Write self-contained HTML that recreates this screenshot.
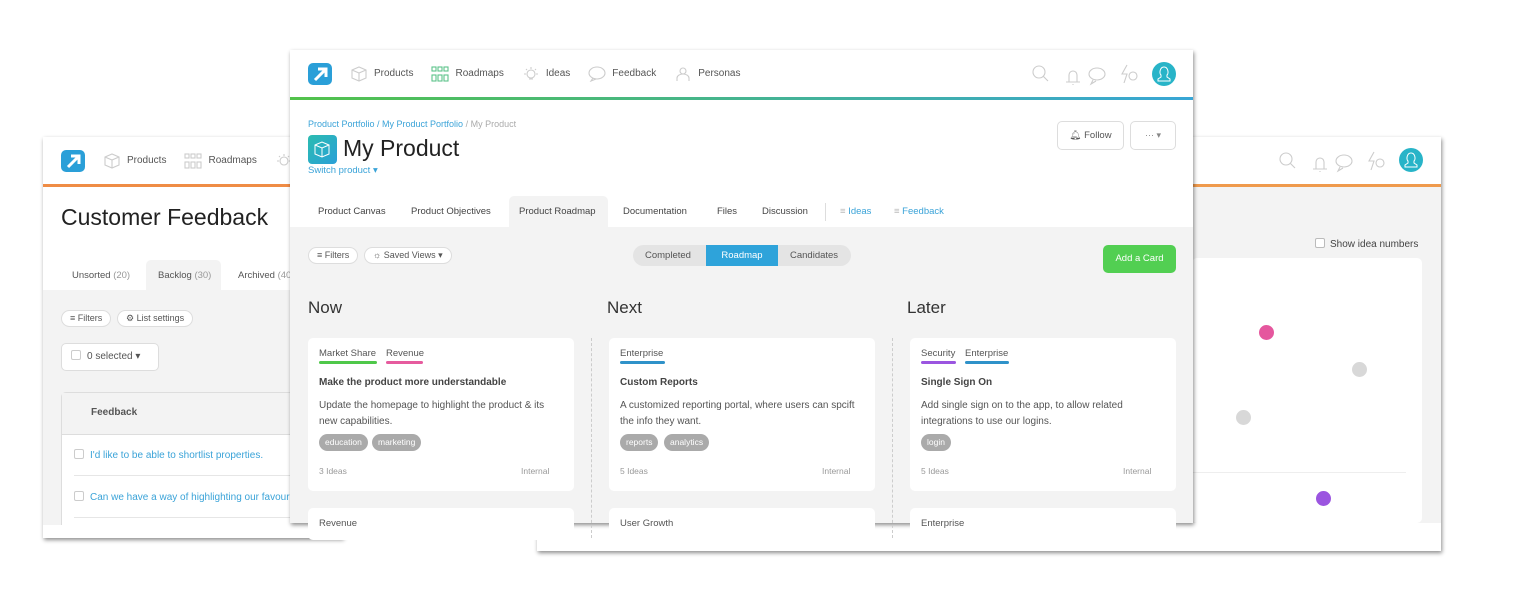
<!DOCTYPE html>
<html><head><meta charset="utf-8"><style>
*{box-sizing:border-box;margin:0;padding:0}
body{width:1522px;height:604px;background:#fff;position:relative;overflow:hidden;font-family:"Liberation Sans",sans-serif;color:#444}
.a{position:absolute}
.win{position:absolute;background:#f3f3f3;box-shadow:1px 2px 4px rgba(0,0,0,.45);overflow:hidden}
.hdr{position:absolute;left:0;right:0;top:0;height:47px;background:#fff}
.nav{position:absolute;top:0;height:47px;display:flex;align-items:center;font-size:10px;color:#555}
.nav span{margin-right:18px;display:flex;align-items:center}
.nav svg{margin-right:6px}
.logo{width:24px;height:22px;background:#2a9fd8;border-radius:5px;position:relative}
.logo svg{position:absolute;left:3px;top:3px}
.pill{position:absolute;height:17px;border:1px solid #ddd;border-radius:9px;background:#fff;font-size:9px;color:#555;padding:0 8px;line-height:15px}
.card{position:absolute;background:#fff;border-radius:5px;width:266px}
.card .lb{position:absolute;top:10px;font-size:9.5px;color:#555}
.card .ln{position:absolute;top:23px;height:3px;border-radius:2px}
.card h4{position:absolute;left:11px;top:39px;font-size:10px;color:#444}
.card p{position:absolute;left:11px;top:60px;font-size:10px;line-height:16px;color:#555;width:240px}
.tag{position:absolute;top:96px;height:17px;border-radius:9px;background:#aaa;color:#fff;font-size:8.5px;line-height:17px;padding:0 6px}
.ft{position:absolute;top:128px;font-size:8.5px;color:#999}
.ic{fill:none;stroke:#ccc;stroke-width:1.1}
.col{position:absolute;top:298px;font-size:17px;color:#333}
.av{position:absolute;width:24px;height:24px;border-radius:50%;background:#28b4c8}
.av svg{position:absolute;left:5px;top:4px}
</style></head><body>

<!-- left window -->
<div class="win" style="left:43px;top:137px;width:300px;height:401px">
 <div class="hdr" style="border-bottom:3px solid #ef8c45;height:50px"></div>
 <div class="nav" style="left:18px"><span><div class="logo"><svg width="18" height="16"><path d="M4 14L14 4M7 3h8v8" fill="none" stroke="#fff" stroke-width="3"/></svg></div></span>
  <span><svg width="18" height="16" class="ic"><path d="M2 4l7-3 7 3v8l-7 3-7-3zM2 4l7 3 7-3M9 7v8"/></svg>Products</span>
  <span><svg width="18" height="16" class="ic"><rect x="1" y="1" width="4" height="4"/><rect x="7" y="1" width="4" height="4"/><rect x="13" y="1" width="4" height="4"/><rect x="1" y="9" width="4" height="6"/><rect x="7" y="9" width="4" height="6"/><rect x="13" y="9" width="4" height="6"/></svg>Roadmaps</span>
  <span><svg width="18" height="16" class="ic"><circle cx="9" cy="8" r="4"/><path d="M9 1v2M2 8h2M14 8h2M4 3l1 1M14 3l-1 1"/></svg></span></div>
 <div class="a" style="left:0;top:50px;width:300px;height:103px;background:#fff"></div>
 <div class="a" style="left:18px;top:67px;font-size:23px;color:#222">Customer Feedback</div>
 <div class="a" style="left:103px;top:123px;width:75px;height:30px;background:#f3f3f3;border-radius:5px 5px 0 0"></div>
 <div class="a" style="left:29px;top:133px;font-size:9.5px;color:#555">Unsorted <span style="color:#999">(20)</span></div>
 <div class="a" style="left:115px;top:133px;font-size:9.5px;color:#555">Backlog <span style="color:#999">(30)</span></div>
 <div class="a" style="left:195px;top:133px;font-size:9.5px;color:#555">Archived <span style="color:#999">(40)</span></div>
 <div class="pill" style="left:18px;top:173px">≡ Filters</div>
 <div class="pill" style="left:74px;top:173px">⚙ List settings</div>
 <div class="a" style="left:18px;top:206px;width:98px;height:28px;background:#fff;border:1px solid #ddd;border-radius:5px;font-size:10px;line-height:26px;padding-left:9px;color:#555"><span style="display:inline-block;width:10px;height:10px;border:1px solid #ccc;border-radius:2px;vertical-align:-1px;margin-right:6px"></span>0 selected ▾</div>
 <div class="a" style="left:18px;top:255px;width:290px;height:140px;background:#fff;border:1px solid #ddd;border-radius:5px"></div>
 <div class="a" style="left:19px;top:256px;width:290px;height:42px;background:#f3f3f3;border-bottom:1px solid #ddd"></div>
 <div class="a" style="left:48px;top:270px;font-size:10px;font-weight:bold;color:#555">Feedback</div>
 <div class="a" style="left:31px;top:312px;font-size:10px;color:#3aa3d8;white-space:nowrap"><span style="display:inline-block;width:10px;height:10px;border:1px solid #ccc;border-radius:2px;margin-right:6px;vertical-align:-1px"></span>I'd like to be able to shortlist properties.</div>
 <div class="a" style="left:31px;top:338px;width:270px;height:1px;background:#e6e6e6"></div>
 <div class="a" style="left:31px;top:354px;font-size:10px;color:#3aa3d8;white-space:nowrap"><span style="display:inline-block;width:10px;height:10px;border:1px solid #ccc;border-radius:2px;margin-right:6px;vertical-align:-1px"></span>Can we have a way of highlighting our favourites</div>
 <div class="a" style="left:31px;top:380px;width:270px;height:1px;background:#e6e6e6"></div>
 <div class="a" style="left:0;top:388px;width:300px;height:13px;background:#fff"></div>
</div>

<!-- right window -->
<div class="win" style="left:537px;top:137px;width:904px;height:414px">
 <div class="hdr" style="border-bottom:3px solid #ef9a4c;height:50px"></div>
 <div class="a" style="left:740px;top:13px"><svg width="140" height="24" class="ic"><circle cx="9" cy="9" r="6"/><path d="M13 13l5 5"/><path d="M36 19h14M39 19v-7a4 4 0 018 0v7M43 21v1"/><ellipse cx="67" cy="11" rx="8" ry="6"/><path d="M63 17l-2 4 5-3"/><path d="M97 2l-5 9h5l-3 9M99 13a4 4 0 108 0a4 4 0 10-8 0"/></svg></div>
 <div class="av" style="left:862px;top:11px"><svg width="14" height="16" fill="none" stroke="#fff" stroke-width="1"><path d="M4 9C2 7 3 1 7 1s5 6 3 8v2l3 2v2H1v-2l3-2z"/></svg></div>
 <div class="a" style="left:778px;top:101px;font-size:10px;color:#444"><span style="display:inline-block;width:10px;height:10px;border:1px solid #bbb;border-radius:2px;background:#fff;vertical-align:-1px;margin-right:5px"></span>Show idea numbers</div>
 <div class="a" style="left:655px;top:121px;width:230px;height:265px;background:#fff;border-radius:5px"></div>
 <div class="a" style="left:655px;top:335px;width:214px;height:1px;background:#eee"></div>
 <div class="a" style="left:722px;top:188px;width:15px;height:15px;border-radius:50%;background:#e5579e"></div>
 <div class="a" style="left:815px;top:225px;width:15px;height:15px;border-radius:50%;background:#d8d8d8"></div>
 <div class="a" style="left:699px;top:273px;width:15px;height:15px;border-radius:50%;background:#d8d8d8"></div>
 <div class="a" style="left:779px;top:354px;width:15px;height:15px;border-radius:50%;background:#9b55e0"></div>
 <div class="a" style="left:0;top:386px;width:904px;height:28px;background:#fff"></div>
</div>

<!-- front window -->
<div class="win" style="left:290px;top:50px;width:903px;height:473px;overflow:visible">
 <div class="hdr" style="height:50px;border-bottom:3px solid;border-image:linear-gradient(90deg,#52c24a,#38a6d6) 1"></div>
 <div class="nav" style="left:18px"><span><div class="logo"><svg width="18" height="16"><path d="M4 14L14 4M7 3h8v8" fill="none" stroke="#fff" stroke-width="3"/></svg></div></span>
  <span><svg width="18" height="16" class="ic"><path d="M2 4l7-3 7 3v8l-7 3-7-3zM2 4l7 3 7-3M9 7v8"/></svg>Products</span>
  <span><svg width="18" height="16" class="ic" style="stroke:#5cc28a"><rect x="1" y="1" width="4" height="4"/><rect x="7" y="1" width="4" height="4"/><rect x="13" y="1" width="4" height="4"/><rect x="1" y="9" width="4" height="6"/><rect x="7" y="9" width="4" height="6"/><rect x="13" y="9" width="4" height="6"/></svg>Roadmaps</span>
  <span><svg width="18" height="16" class="ic"><circle cx="9" cy="8" r="4"/><path d="M9 1v2M2 8h2M14 8h2M4 3l1 1M14 3l-1 1M7 13h4"/></svg>Ideas</span>
  <span><svg width="18" height="16" class="ic"><ellipse cx="9" cy="7" rx="8" ry="6"/><path d="M5 12l-2 3 5-2"/></svg>Feedback</span>
  <span><svg width="18" height="16" class="ic"><circle cx="9" cy="5" r="3"/><path d="M3 15v-3a6 4 0 0112 0v3"/></svg>Personas</span></div>
 <div class="a" style="left:740px;top:13px"><svg width="140" height="24" class="ic"><circle cx="9" cy="9" r="6"/><path d="M13 13l5 5"/><path d="M36 19h14M39 19v-7a4 4 0 018 0v7M43 21v1"/><ellipse cx="67" cy="11" rx="8" ry="6"/><path d="M63 17l-2 4 5-3"/><path d="M97 2l-5 9h5l-3 9M99 13a4 4 0 108 0a4 4 0 10-8 0"/></svg></div>
 <div class="av" style="left:862px;top:12px"><svg width="14" height="16" fill="none" stroke="#fff" stroke-width="1"><path d="M4 9C2 7 3 1 7 1s5 6 3 8v2l3 2v2H1v-2l3-2z"/></svg></div>
 <div class="a" style="left:0;top:50px;width:903px;height:127px;background:#fff"></div>
 <div class="a" style="left:18px;top:69px;font-size:9px;color:#3aa3d8">Product Portfolio / My Product Portfolio <span style="color:#aaa">/ My Product</span></div>
 <div class="a" style="left:18px;top:85px;width:29px;height:29px;border-radius:4px;background:linear-gradient(135deg,#2bbcb0,#2aa0d8)"><svg width="29" height="29" fill="none" stroke="#fff" stroke-width="1"><path d="M7 10l7-3 7 3v9l-7 3-7-3zM7 10l7 3 7-3M14 13v9"/></svg></div>
 <div class="a" style="left:53px;top:85px;font-size:23px;color:#222">My Product</div>
 <div class="a" style="left:18px;top:115px;font-size:9.5px;color:#3aa3d8">Switch product ▾</div>
 <div class="a" style="left:767px;top:71px;width:67px;height:29px;border:1px solid #ddd;border-radius:5px;font-size:9.5px;line-height:27px;text-align:center;color:#555">🔔︎ Follow</div>
 <div class="a" style="left:840px;top:71px;width:46px;height:29px;border:1px solid #ddd;border-radius:5px;font-size:9px;line-height:27px;text-align:center;color:#888">··· ▾</div>
 <div class="a" style="left:219px;top:146px;width:99px;height:31px;background:#f3f3f3;border-radius:5px 5px 0 0"></div>
 <div class="a" style="left:28px;top:156px;font-size:9.5px;color:#444">Product Canvas</div>
 <div class="a" style="left:121px;top:156px;font-size:9.5px;color:#444">Product Objectives</div>
 <div class="a" style="left:229px;top:156px;font-size:9.5px;color:#444">Product Roadmap</div>
 <div class="a" style="left:333px;top:156px;font-size:9.5px;color:#444">Documentation</div>
 <div class="a" style="left:427px;top:156px;font-size:9.5px;color:#444">Files</div>
 <div class="a" style="left:472px;top:156px;font-size:9.5px;color:#444">Discussion</div>
 <div class="a" style="left:535px;top:153px;width:1px;height:18px;background:#ddd"></div>
 <div class="a" style="left:550px;top:156px;font-size:9.5px;color:#3aa3d8"><span style="color:#bbb">≡</span> Ideas</div>
 <div class="a" style="left:604px;top:156px;font-size:9.5px;color:#3aa3d8"><span style="color:#bbb">≡</span> Feedback</div>
 <div class="pill" style="left:18px;top:197px">≡ Filters</div>
 <div class="pill" style="left:74px;top:197px">☼ Saved Views ▾</div>
 <div class="a" style="left:343px;top:195px;width:218px;height:21px;background:#e4e4e4;border-radius:11px;font-size:9.5px;color:#555;line-height:21px">
  <span class="a" style="left:12px">Completed</span>
  <span class="a" style="left:73px;width:72px;height:21px;background:#2ea3da;color:#fff;text-align:center">Roadmap</span>
  <span class="a" style="left:157px">Candidates</span></div>
 <div class="a" style="left:813px;top:195px;width:73px;height:28px;background:#52cf52;border-radius:5px;color:#fff;font-size:9.5px;line-height:28px;text-align:center">Add a Card</div>
 <div class="a" style="left:301px;top:288px;height:200px;border-left:1px dashed #ccc"></div>
 <div class="a" style="left:602px;top:288px;height:200px;border-left:1px dashed #ccc"></div>
</div>

<div class="col" style="left:308px">Now</div>
<div class="col" style="left:607px">Next</div>
<div class="col" style="left:907px">Later</div>

<div class="card" style="left:308px;top:338px;height:153px">
 <div class="lb" style="left:11px">Market Share</div><div class="ln" style="left:11px;width:58px;background:#4fc84a"></div>
 <div class="lb" style="left:78px">Revenue</div><div class="ln" style="left:78px;width:37px;background:#e65b9e"></div>
 <h4>Make the product more understandable</h4>
 <p>Update the homepage to highlight the product &amp; its new capabilities.</p>
 <div class="tag" style="left:11px">education</div><div class="tag" style="left:64px">marketing</div>
 <div class="ft" style="left:11px">3 Ideas</div><div class="ft" style="left:213px">Internal</div></div>
<div class="card" style="left:609px;top:338px;height:153px">
 <div class="lb" style="left:11px">Enterprise</div><div class="ln" style="left:11px;width:45px;background:#2f92c9"></div>
 <h4>Custom Reports</h4>
 <p>A customized reporting portal, where users can spcift the info they want.</p>
 <div class="tag" style="left:11px">reports</div><div class="tag" style="left:55px">analytics</div>
 <div class="ft" style="left:11px">5 Ideas</div><div class="ft" style="left:213px">Internal</div></div>
<div class="card" style="left:910px;top:338px;height:153px">
 <div class="lb" style="left:11px">Security</div><div class="ln" style="left:11px;width:35px;background:#9b55e0"></div>
 <div class="lb" style="left:55px">Enterprise</div><div class="ln" style="left:55px;width:44px;background:#2f92c9"></div>
 <h4>Single Sign On</h4>
 <p>Add single sign on to the app, to allow related integrations to use our logins.</p>
 <div class="tag" style="left:11px">login</div>
 <div class="ft" style="left:11px">5 Ideas</div><div class="ft" style="left:213px">Internal</div></div>
<div class="card" style="left:308px;top:508px;height:32px"><div class="lb" style="left:11px">Revenue</div></div>
<div class="card" style="left:609px;top:508px;height:32px"><div class="lb" style="left:11px">User Growth</div></div>
<div class="card" style="left:910px;top:508px;height:32px"><div class="lb" style="left:11px">Enterprise</div></div>
</body></html>
